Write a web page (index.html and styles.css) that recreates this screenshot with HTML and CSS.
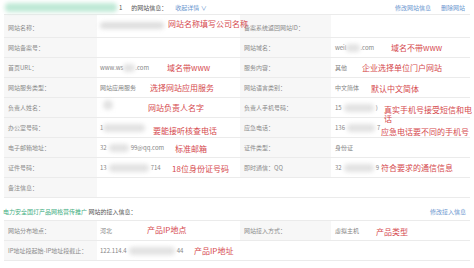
FILE: index.html
```html
<!DOCTYPE html>
<html lang="zh">
<head>
<meta charset="utf-8">
<link rel="stylesheet" href="styles.css">
</head>
<body>
<div class="page">
  <div class="topbar">
    <div class="title">
      <span class="blur blur-green"></span>
      <span class="dark">1</span>
      <span class="dark gap">的网站信息：</span>
      <span class="link gap2">收起详情 ∨</span>
    </div>
    <div class="actions">
      <span class="link">修改网站信息</span>
      <span class="link">删除网站</span>
    </div>
  </div>

  <div class="grid first">
    <div class="lab tall">网站名称：</div>
    <div class="val tall"><span class="blur blur-bar"></span></div>
    <div class="lab tall">备案系统返回网站ID：</div>
    <div class="val tall"></div>

    <div class="lab">网站备案号：</div>
    <div class="val"></div>
    <div class="lab">网站域名：</div>
    <div class="val">weil<span class="blur w14"></span>.com</div>

    <div class="lab">首页URL：</div>
    <div class="val">www.ws<span class="blur w12"></span>.com</div>
    <div class="lab">服务内容：</div>
    <div class="val">其他</div>

    <div class="lab">网站服务类型：</div>
    <div class="val">网站应用服务</div>
    <div class="lab">网站语言类别：</div>
    <div class="val">中文简体</div>

    <div class="lab">负责人姓名：</div>
    <div class="val"><span class="blur dot"></span></div>
    <div class="lab">负责人手机号码：</div>
    <div class="val">15<span class="blur w30"></span>)</div>

    <div class="lab">办公室号码：</div>
    <div class="val">1<span class="blur w42"></span></div>
    <div class="lab">应急电话：</div>
    <div class="val">136<span class="blur w28"></span>7</div>

    <div class="lab">电子邮箱地址：</div>
    <div class="val">32<span class="blur w20"></span>99@qq.com</div>
    <div class="lab">证件类型：</div>
    <div class="val">身份证</div>

    <div class="lab">证件号码：</div>
    <div class="val">13<span class="blur w40"></span>714</div>
    <div class="lab">即时通信：QQ</div>
    <div class="val">32<span class="blur w30"></span>9</div>

    <div class="lab">备注信息：</div>
    <div class="val span3"></div>
  </div>

  <div class="section">
    <div><span class="green">电力安全国灯产品网格营传推广</span> <span class="dark">网站的接入信息：</span></div>
    <span class="link">修改接入信息</span>
  </div>

  <div class="grid">
    <div class="lab">网站分布地点：</div>
    <div class="val">河北</div>
    <div class="lab">网站接入方式：</div>
    <div class="val">虚拟主机</div>

    <div class="lab">IP地址段起始-IP地址段截止：</div>
    <div class="val span3">122.114.4<span class="blur w46"></span>44</div>
  </div>

  <div class="note n1">网站名称填写公司名称</div>
  <div class="note n2">域名带www</div>
  <div class="note n3">选择网站应用服务</div>
  <div class="note n4">网站负责人名字</div>
  <div class="note n5">要能接听核查电话</div>
  <div class="note n6">标准邮箱</div>
  <div class="note n7">18位身份证号码</div>
  <div class="note n8">域名不带www</div>
  <div class="note n9">企业选择单位门户网站</div>
  <div class="note n10">默认中文简体</div>
  <div class="note n11">真实手机号接受短信和电话</div>
  <div class="note n12">应急电话要不同的手机号</div>
  <div class="note n13">符合要求的通信信息</div>
  <div class="note n14">产品IP地点</div>
  <div class="note n15">产品IP地址</div>
  <div class="note n16">产品类型</div>
</div>
</body>
</html>
```

FILE: styles.css
```css
* { box-sizing: border-box; }
html, body { margin: 0; padding: 0; background: #fff; }
body {
  font-family: "Noto Sans CJK SC", "Noto Sans", sans-serif;
  font-size: 6px;
  color: #8a8a8a;
}
.page {
  position: relative;
  width: 474px;
  height: 268px;
  overflow: hidden;
}
.topbar {
  height: 14px;
  display: flex;
  align-items: center;
  justify-content: space-between;
  padding: 0 9px 0 5px;
}
.title, .actions { display: flex; align-items: center; }
.actions { gap: 10px; }
.dark { color: #555; }
.gap { margin-left: 9px; }
.gap2 { margin-left: 8px; }
.link { color: #6c97cf; }
.green { color: #3fae7f; }

.grid {
  margin: 0 4px;
  display: grid;
  grid-template-columns: 93px 143px 91px 139px;
  border-top: 1px solid #ebebeb;
}
.lab, .val {
  height: 20px;
  display: flex;
  align-items: center;
  border-bottom: 1px solid #ebebeb;
  white-space: nowrap;
}
.lab {
  background: #f7f7f7;
  padding-left: 4px;
  color: #8c8c8c;
}
.val {
  padding-left: 3px;
  color: #858585;
}
.grid .val:nth-child(4n) { padding-left: 4px; }
.tall { height: 23px; padding-top: 2px; }
.span3 { grid-column: span 3; }

.section {
  height: 22px;
  display: flex;
  align-items: flex-end;
  justify-content: space-between;
  padding: 0 8px 4px 3px;
}

.blur {
  display: inline-block;
  height: 8px;
  border-radius: 4px;
  background: #e2e2e2;
  filter: blur(2px);
}
.blur-green {
  width: 112px;
  height: 9px;
  background: #bfe9d6;
  margin-right: 2px;
}
.blur-bar {
  width: 64px;
  height: 7px;
  margin-top: -4px;
  background: #dedede;
}
.dot { width: 10px; height: 10px; border-radius: 50%; margin-left: 3px; margin-top: -6px; }
.w12 { width: 12px; }
.w14 { width: 14px; }
.w20 { width: 20px; margin: 0 2px; }
.w28 { width: 28px; margin: 0 2px; }
.w30 { width: 30px; margin: 0 2px; }
.w40 { width: 40px; margin: 0 2px; }
.w42 { width: 42px; }
.w46 { width: 46px; margin: 0 2px; }

.note {
  position: absolute;
  font-size: 8px;
  line-height: 10px;
  color: #d5484d;
  white-space: nowrap;
}
.n1 { left: 168px; top: 19px; }
.n2 { left: 167px; top: 63px; }
.n3 { left: 150px; top: 83px; }
.n4 { left: 148px; top: 103px; }
.n5 { left: 153px; top: 126px; }
.n6 { left: 175px; top: 144px; }
.n7 { left: 172px; top: 164px; }
.n8 { left: 391px; top: 43px; }
.n9 { left: 362px; top: 63px; }
.n10 { left: 371px; top: 84px; }
.n11 { left: 384px; top: 105px; width: 90px; white-space: normal; line-height: 9px; }
.n12 { left: 381px; top: 127px; }
.n13 { left: 381px; top: 163px; }
.n14 { left: 147px; top: 225px; }
.n15 { left: 194px; top: 246px; }
.n16 { left: 376px; top: 227px; }
```
